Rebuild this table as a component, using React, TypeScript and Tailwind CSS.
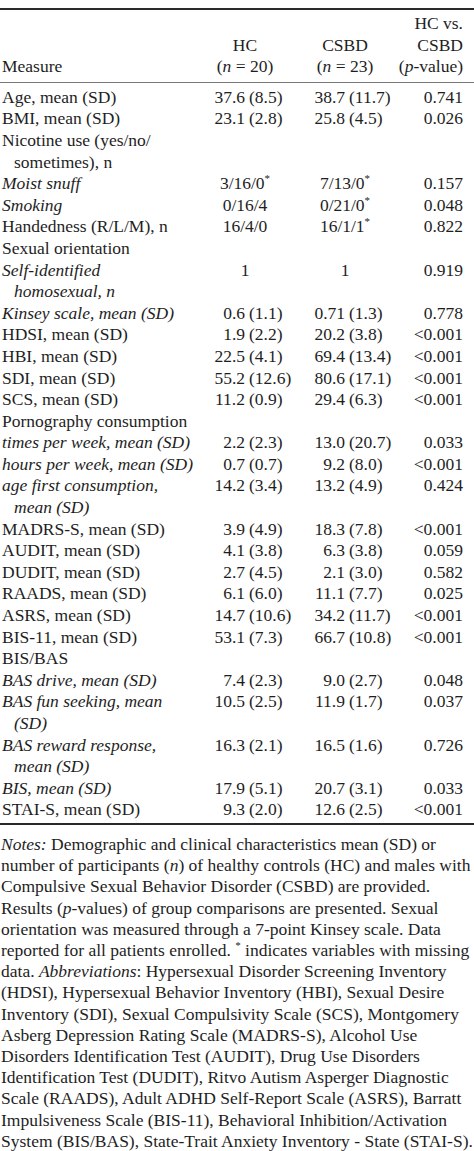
import React from "react";

type Val = string | [string, string];

type Row = {
  label: string[];
  italic?: boolean;
  hc?: Val;
  csbd?: Val;
  p?: string;
};

const rows: Row[] = [
  { label: ["Age, mean (SD)"], hc: ["37.6", "(8.5)"], csbd: ["38.7", "(11.7)"], p: "0.741" },
  { label: ["BMI, mean (SD)"], hc: ["23.1", "(2.8)"], csbd: ["25.8", "(4.5)"], p: "0.026" },
  { label: ["Nicotine use (yes/no/", "sometimes), n"] },
  { label: ["Moist snuff"], italic: true, hc: "3/16/0*", csbd: "7/13/0*", p: "0.157" },
  { label: ["Smoking"], italic: true, hc: "0/16/4", csbd: "0/21/0*", p: "0.048" },
  { label: ["Handedness (R/L/M), n"], hc: "16/4/0", csbd: "16/1/1*", p: "0.822" },
  { label: ["Sexual orientation"] },
  { label: ["Self-identified", "homosexual, n"], italic: true, hc: "1", csbd: "1", p: "0.919" },
  { label: ["Kinsey scale, mean (SD)"], italic: true, hc: ["0.6", "(1.1)"], csbd: ["0.71", "(1.3)"], p: "0.778" },
  { label: ["HDSI, mean (SD)"], hc: ["1.9", "(2.2)"], csbd: ["20.2", "(3.8)"], p: "<0.001" },
  { label: ["HBI, mean (SD)"], hc: ["22.5", "(4.1)"], csbd: ["69.4", "(13.4)"], p: "<0.001" },
  { label: ["SDI, mean (SD)"], hc: ["55.2", "(12.6)"], csbd: ["80.6", "(17.1)"], p: "<0.001" },
  { label: ["SCS, mean (SD)"], hc: ["11.2", "(0.9)"], csbd: ["29.4", "(6.3)"], p: "<0.001" },
  { label: ["Pornography consumption"] },
  { label: ["times per week, mean (SD)"], italic: true, hc: ["2.2", "(2.3)"], csbd: ["13.0", "(20.7)"], p: "0.033" },
  { label: ["hours per week, mean (SD)"], italic: true, hc: ["0.7", "(0.7)"], csbd: ["9.2", "(8.0)"], p: "<0.001" },
  { label: ["age first consumption,", "mean (SD)"], italic: true, hc: ["14.2", "(3.4)"], csbd: ["13.2", "(4.9)"], p: "0.424" },
  { label: ["MADRS-S, mean (SD)"], hc: ["3.9", "(4.9)"], csbd: ["18.3", "(7.8)"], p: "<0.001" },
  { label: ["AUDIT, mean (SD)"], hc: ["4.1", "(3.8)"], csbd: ["6.3", "(3.8)"], p: "0.059" },
  { label: ["DUDIT, mean (SD)"], hc: ["2.7", "(4.5)"], csbd: ["2.1", "(3.0)"], p: "0.582" },
  { label: ["RAADS, mean (SD)"], hc: ["6.1", "(6.0)"], csbd: ["11.1", "(7.7)"], p: "0.025" },
  { label: ["ASRS, mean (SD)"], hc: ["14.7", "(10.6)"], csbd: ["34.2", "(11.7)"], p: "<0.001" },
  { label: ["BIS-11, mean (SD)"], hc: ["53.1", "(7.3)"], csbd: ["66.7", "(10.8)"], p: "<0.001" },
  { label: ["BIS/BAS"] },
  { label: ["BAS drive, mean (SD)"], italic: true, hc: ["7.4", "(2.3)"], csbd: ["9.0", "(2.7)"], p: "0.048" },
  { label: ["BAS fun seeking, mean", "(SD)"], italic: true, hc: ["10.5", "(2.5)"], csbd: ["11.9", "(1.7)"], p: "0.037" },
  { label: ["BAS reward response,", "mean (SD)"], italic: true, hc: ["16.3", "(2.1)"], csbd: ["16.5", "(1.6)"], p: "0.726" },
  { label: ["BIS, mean (SD)"], italic: true, hc: ["17.9", "(5.1)"], csbd: ["20.7", "(3.1)"], p: "0.033" },
  { label: ["STAI-S, mean (SD)"], hc: ["9.3", "(2.0)"], csbd: ["12.6", "(2.5)"], p: "<0.001" },
];

function Star() {
  return <span className="inline-block align-top text-[11px] leading-[11px]">*</span>;
}

// a trailing * marks missing data, drawn as a small raised asterisk
function Plain({ text }: { text: string }) {
  if (text.endsWith("*")) {
    return (
      <span>
        {text.slice(0, -1)}
        <Star />
      </span>
    );
  }
  return <span>{text}</span>;
}

function Cell({ v }: { v?: Val }) {
  if (!v) return <div className="w-[100px]" />;
  if (typeof v === "string") {
    return (
      <div className="w-[100px] text-center">
        <Plain text={v} />
      </div>
    );
  }
  return (
    <div className="w-[100px] flex">
      <span className="w-1/2 text-right">{v[0]}</span>
      <span className="w-1/2 pl-[4px] text-left">{v[1]}</span>
    </div>
  );
}

const notes: React.ReactNode[] = [
  <><i>Notes:</i> Demographic and clinical characteristics mean (SD) or</>,
  <>number of participants (<i>n</i>) of healthy controls (HC) and males with</>,
  <>Compulsive Sexual Behavior Disorder (CSBD) are provided.</>,
  <>Results (<i>p</i>-values) of group comparisons are presented. Sexual</>,
  <>orientation was measured through a 7-point Kinsey scale. Data</>,
  <>reported for all patients enrolled. <Star /> indicates variables with missing</>,
  <>data. <i>Abbreviations</i>: Hypersexual Disorder Screening Inventory</>,
  <>(HDSI), Hypersexual Behavior Inventory (HBI), Sexual Desire</>,
  <>Inventory (SDI), Sexual Compulsivity Scale (SCS), Montgomery</>,
  <>Asberg Depression Rating Scale (MADRS-S), Alcohol Use</>,
  <>Disorders Identification Test (AUDIT), Drug Use Disorders</>,
  <>Identification Test (DUDIT), Ritvo Autism Asperger Diagnostic</>,
  <>Scale (RAADS), Adult ADHD Self-Report Scale (ASRS), Barratt</>,
  <>Impulsiveness Scale (BIS-11), Behavioral Inhibition/Activation</>,
  <>System (BIS/BAS), State-Trait Anxiety Inventory - State (STAI-S).</>,
];

export default function App() {
  return (
    <div className="w-[474px] h-[1151px] overflow-hidden bg-white text-[#1e1e1e] font-['Liberation_Serif',serif] text-[17.5px] leading-[21.6px]">
      <div className="h-[8px]" />
      {/* header */}
      <div className="border-t-2 border-[#2a2a2a] border-b border-b-[#777] pt-[3px] pb-[4px] flex items-end">
        <div className="w-[195px] pl-[2px]">Measure</div>
        <div className="w-[100px] text-center">
          <div>HC</div>
          <div>(<i>n</i> = 20)</div>
        </div>
        <div className="w-[100px] text-center">
          <div>CSBD</div>
          <div>(<i>n</i> = 23)</div>
        </div>
        <div className="w-[68px] text-right whitespace-nowrap">
          <div>HC vs.</div>
          <div>CSBD</div>
          <div>(<i>p</i>-value)</div>
        </div>
      </div>

      {/* body */}
      <div className="pt-[4px] pb-[2px] border-b-2 border-[#2a2a2a]">
        {rows.map((r, i) => (
          <div key={i} className="flex items-start whitespace-nowrap">
            <div className={`w-[195px] pl-[2px] ${r.italic ? "italic" : ""}`}>
              {r.label.map((l, j) => (
                <div key={j} className={j > 0 ? "pl-[12px]" : ""}>{l}</div>
              ))}
            </div>
            <Cell v={r.hc} />
            <Cell v={r.csbd} />
            <div className="w-[68px] text-right">{r.p}</div>
          </div>
        ))}
      </div>

      {/* notes */}
      <div className="pt-[9px] pl-[1px] whitespace-nowrap leading-[21.2px]">
        {notes.map((n, i) => (
          <div key={i}>{n}</div>
        ))}
      </div>
    </div>
  );
}
